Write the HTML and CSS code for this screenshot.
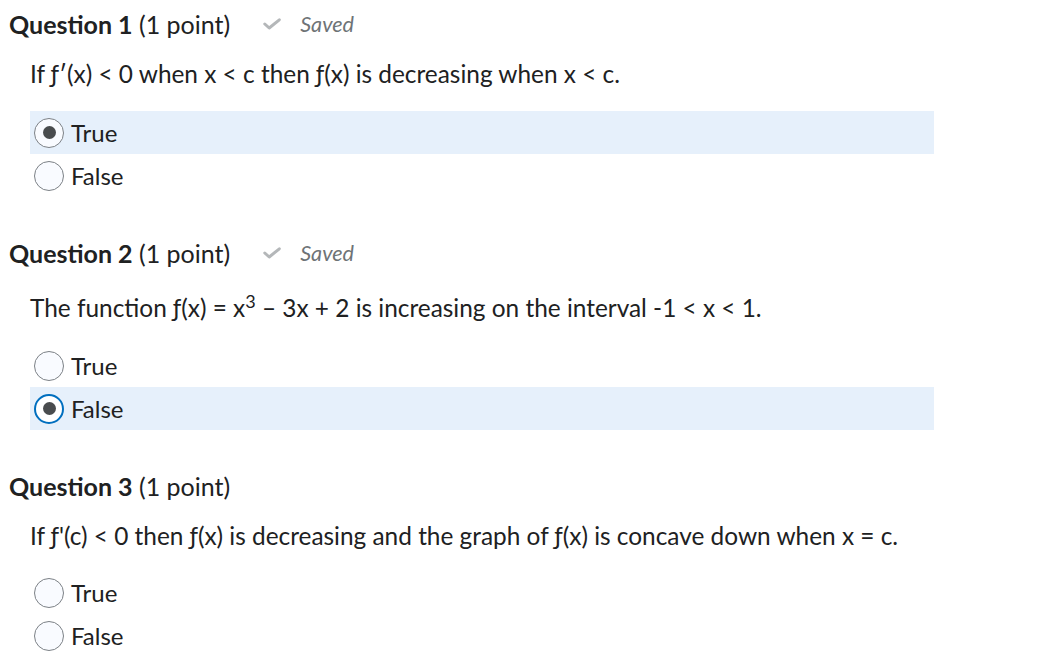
FILE: index.html
```html
<!DOCTYPE html>
<html>
<head>
<meta charset="utf-8">
<link rel="stylesheet" href="styles.css">
</head>
<body>
<div class="page">
  <section class="question">
    <div class="q-head">
      <h2 class="q-title"><strong>Question 1</strong> (1 point)</h2>
      <div class="saved">
        <svg class="check" viewBox="0 0 18 12" width="18" height="12"><path d="M1.8 6 L6.2 10 L16.3 1.8" fill="none" stroke="#b4b7b9" stroke-width="3" stroke-linecap="round" stroke-linejoin="round"/></svg>
        <span>Saved</span>
      </div>
    </div>
    <p class="q-text">If ƒ′(x) &lt; 0 when x &lt; c then ƒ(x) is decreasing when x &lt; c.</p>
    <div class="options">
      <label class="opt selected"><span class="radio checked"></span><span class="opt-label">True</span></label>
      <label class="opt"><span class="radio"></span><span class="opt-label">False</span></label>
    </div>
  </section>

  <section class="question">
    <div class="q-head">
      <h2 class="q-title"><strong>Question 2</strong> (1 point)</h2>
      <div class="saved">
        <svg class="check" viewBox="0 0 18 12" width="18" height="12"><path d="M1.8 6 L6.2 10 L16.3 1.8" fill="none" stroke="#b4b7b9" stroke-width="3" stroke-linecap="round" stroke-linejoin="round"/></svg>
        <span>Saved</span>
      </div>
    </div>
    <p class="q-text q-text-sup">The function ƒ(x) = x<sup>3</sup> – 3x + 2 is increasing on the interval -1 &lt; x &lt; 1.</p>
    <div class="options options-sup">
      <label class="opt"><span class="radio"></span><span class="opt-label">True</span></label>
      <label class="opt selected"><span class="radio checked focus"></span><span class="opt-label">False</span></label>
    </div>
  </section>

  <section class="question">
    <div class="q-head">
      <h2 class="q-title"><strong>Question 3</strong> (1 point)</h2>
    </div>
    <p class="q-text">If ƒ'(c) &lt; 0 then ƒ(x) is decreasing and the graph of ƒ(x) is concave down when x = c.</p>
    <div class="options options-last">
      <label class="opt"><span class="radio"></span><span class="opt-label">True</span></label>
      <label class="opt"><span class="radio"></span><span class="opt-label">False</span></label>
    </div>
  </section>
</div>
</body>
</html>
```

FILE: styles.css
```css
html, body {
  margin: 0;
  padding: 0;
  background: #ffffff;
}
body {
  font-family: Lato, "Open Sans", "Liberation Sans", sans-serif;
  color: #202122;
}
.page {
  padding: 9px 0 0 9px;
  display: flex;
  flex-direction: column;
  gap: 41px;
}
.question {
  display: flex;
  flex-direction: column;
}
.q-head {
  display: flex;
  align-items: center;
  height: 30px;
  gap: 33px;
}
.q-title {
  margin: 0;
  font-size: 25px;
  font-weight: 400;
  line-height: 30px;
  color: #202122;
}
.q-title strong {
  font-weight: 700;
}
.saved {
  display: flex;
  align-items: center;
  gap: 19px;
  color: #6e7376;
  font-style: italic;
  font-size: 21.6px;
}
.q-text {
  margin: 20px 0 0 21px;
  font-size: 24.4px;
  line-height: 30px;
}
.q-text sup {
  font-size: 18px;
  line-height: 0;
}
.q-text-sup {
  margin-top: 25px;
}
.options {
  margin: 22px 0 0 21px;
  width: 904px;
  display: flex;
  flex-direction: column;
}
.options-sup {
  margin-top: 21px;
}
.options-last {
  margin-top: 20px;
}
.opt {
  display: flex;
  align-items: center;
  height: 43px;
  gap: 7px;
  padding-left: 4px;
  font-size: 24px;
}
.opt.selected {
  background: #e6f0fb;
}
.radio {
  box-sizing: border-box;
  width: 30px;
  height: 30px;
  border-radius: 50%;
  border: 1px solid #7c8186;
  background: #f9fbff;
  display: flex;
  align-items: center;
  justify-content: center;
}
.radio.checked::after {
  content: "";
  width: 13px;
  height: 13px;
  border-radius: 50%;
  background: #494c4e;
}
.radio.focus {
  border: 2px solid #006fbf;
  background: #ffffff;
}
.opt-label {
  line-height: 30px;
}
```
